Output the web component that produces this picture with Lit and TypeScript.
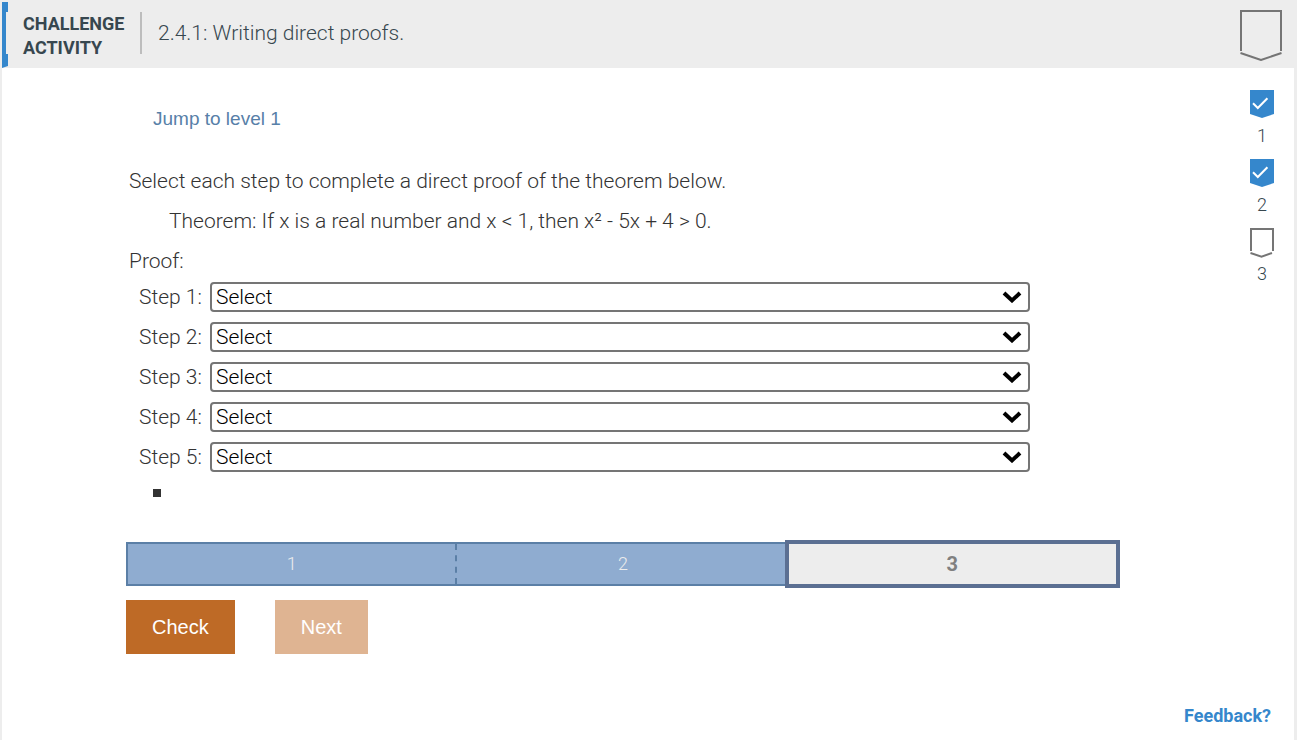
import { LitElement, css, html, svg } from "lit";
import { customElement, property, state } from "lit/decorators.js";

@customElement("level-badge")
export class LevelBadge extends LitElement {
  @property({ type: Boolean }) done = false;

  static styles = css`
    :host {
      display: block;
    }
    .icon {
      display: block;
      width: 24px;
      height: 30px;
    }
  `;

  render() {
    const shape = this.done
      ? svg`<path d="M0 0H24V24L12 28L0 24Z" fill="#3587cc" />
          <path d="M3 13.2L7.8 18L17.4 8.2" fill="none" stroke="#fff" stroke-width="2" />`
      : svg`<path d="M1 23V1H23V23" fill="none" stroke="#757575" stroke-width="2" />
          <path d="M0.5 25L11.5 28.6L22 25" fill="none" stroke="#757575" stroke-width="2" />`;
    return html`<svg class="icon" viewBox="0 0 24 30" aria-hidden="true">${shape}</svg>`;
  }
}

@customElement("app-root")
export class AppRoot extends LitElement {
  @state() private steps = [1, 2, 3, 4, 5];
  @state() private levels = [
    { id: 1, done: true },
    { id: 2, done: true },
    { id: 3, done: false },
  ];

  static styles = css`
    :host {
      display: block;
      box-sizing: border-box;
      min-height: 100vh;
      background: #fff;
      border-left: 2px solid #ededed;
      color: #333;
      font-family: Roboto, sans-serif;
      font-size: 21px;
      font-weight: 300;
    }
    * {
      box-sizing: border-box;
    }
    .header {
      display: flex;
      align-items: center;
      height: 68px;
      margin-right: 1px;
      padding: 2px 15px 0 0;
      background: #ededed;
      color: #37474f;
    }
    .accent {
      display: block;
      width: 6px;
      height: 66px;
    }
    .kind {
      width: 118px;
      margin: 0;
      padding: 2px 0 0 15px;
      font-size: 18px;
      line-height: 24px;
      font-weight: 700;
    }
    .title {
      flex: 1;
      margin: 0 0 4px 14px;
      padding-left: 16px;
      border-left: 2px solid #bdbdbd;
      font-size: 21px;
      line-height: 42px;
      font-weight: 300;
    }
    .ribbon {
      display: block;
      width: 42px;
      height: 52px;
    }
    .body {
      display: flex;
      align-items: flex-start;
      min-height: calc(100vh - 68px);
      margin-right: 1px;
      border-right: 3px solid #ededed;
    }
    .main {
      flex: 1;
      padding: 36px 0 0 124px;
    }
    .jump {
      display: inline-block;
      margin-left: 27px;
      color: #5780a8;
      font-family: "Liberation Sans", sans-serif;
      font-size: 19px;
      line-height: 30px;
      text-decoration: none;
    }
    .prompt {
      padding: 27px 90px 0 3px;
    }
    .line {
      margin: 0;
      line-height: 40px;
    }
    .theorem {
      padding-left: 40px;
    }
    .steps {
      display: grid;
      gap: 10px;
      margin-top: 1px;
      padding-left: 10px;
    }
    .step {
      display: flex;
      align-items: center;
      height: 30px;
    }
    .label {
      width: 71px;
    }
    .field {
      flex: 1;
      display: grid;
      align-items: center;
    }
    .select {
      grid-area: 1 / 1;
      width: 100%;
      height: 30px;
      padding: 0 40px 0 4px;
      appearance: none;
      border: 2px solid #757575;
      border-radius: 4px;
      background: #fff;
      color: #000;
      font: inherit;
    }
    .chevron {
      grid-area: 1 / 1;
      justify-self: end;
      width: 20px;
      height: 12px;
      margin-right: 8px;
      pointer-events: none;
    }
    .end {
      width: 8px;
      height: 8px;
      margin: 17px 0 0 24px;
      background: #333;
    }
    .levels {
      display: grid;
      grid-template-columns: repeat(3, 1fr);
      align-items: center;
      margin-top: 43px;
      font-size: 18px;
      line-height: 40px;
      text-align: center;
    }
    .level {
      height: 44px;
      border: 2px solid #5b7fa6;
      border-left: 0;
      border-right: 0;
      background: #8facd0;
      color: #ededed;
    }
    .level:first-child {
      border-left: 2px solid #5b7fa6;
    }
    .dash {
      display: block;
      height: 40px;
      border-right: 2px dashed #5b7fa6;
    }
    .current {
      height: 48px;
      margin-left: -4px;
      border: 4px solid #5b6f92;
      background: #ededed;
      color: #808080;
      font-size: 20px;
      font-weight: 700;
    }
    .actions {
      display: flex;
      gap: 40px;
      margin-top: 12px;
    }
    .button {
      height: 54px;
      padding: 0 26px;
      border: 0;
      background: #be6a26;
      color: #fff;
      font-family: "Liberation Sans", sans-serif;
      font-size: 20px;
    }
    .button:disabled {
      background: #dfb492;
    }
    .side {
      display: flex;
      flex-direction: column;
      align-items: flex-end;
      align-self: stretch;
      justify-content: space-between;
      width: 174px;
      padding: 22px 20px 10px 0;
    }
    .rail {
      display: grid;
      gap: 7px;
      margin: 0;
      padding: 0;
      list-style: none;
      font-size: 18px;
      line-height: 32px;
      text-align: center;
      color: #37474f;
    }
    .feedback {
      margin-right: 3px;
      color: #3587cc;
      font-size: 18px;
      line-height: 28px;
      font-weight: 700;
      text-decoration: none;
    }
  `;

  render() {
    return html`
      <header class="header">
        <svg class="accent" viewBox="0 0 6 66" aria-hidden="true">
          <path d="M0 0H6V10H4V52H6V64L0 66Z" fill="#3587cc" />
        </svg>
        <p class="kind">CHALLENGE ACTIVITY</p>
        <h1 class="title">2.4.1: Writing direct proofs.</h1>
        <svg class="ribbon" viewBox="0 0 42 52" aria-hidden="true">
          <path d="M1 42V2H41V42" fill="none" stroke="#757575" stroke-width="2" />
          <path d="M0.5 44L21 51L41.5 44" fill="none" stroke="#757575" stroke-width="2" />
        </svg>
      </header>
      <div class="body">
        <main class="main">
          <a class="jump" href="#level-1">Jump to level 1</a>
          <section class="prompt">
            <p class="line">Select each step to complete a direct proof of the theorem below.</p>
            <p class="line theorem">Theorem: If x is a real number and x &lt; 1, then x² - 5x + 4 &gt; 0.</p>
            <p class="line">Proof:</p>
            <div class="steps">
              ${this.steps.map(
                (n) => html`<div class="step">
                  <label class="label" for="step-${n}">Step ${n}:</label>
                  <div class="field">
                    <select class="select" id="step-${n}">
                      <option>Select</option>
                    </select>
                    <svg class="chevron" viewBox="0 0 20 12" aria-hidden="true">
                      <path d="M2 2L10 9.4L18 2" fill="none" stroke="#000" stroke-width="4" />
                    </svg>
                  </div>
                </div>`,
              )}
            </div>
            <div class="end"></div>
          </section>
          <div class="levels">
            <div class="level"><span class="dash">1</span></div>
            <div class="level">2</div>
            <div class="current">3</div>
          </div>
          <div class="actions">
            <button class="button" type="button">Check</button>
            <button class="button" type="button" disabled>Next</button>
          </div>
        </main>
        <aside class="side">
          <ol class="rail">
            ${this.levels.map(
              (l) => html`<li><level-badge ?done=${l.done}></level-badge>${l.id}</li>`,
            )}
          </ol>
          <a class="feedback" href="#feedback">Feedback?</a>
        </aside>
      </div>
    `;
  }
}
